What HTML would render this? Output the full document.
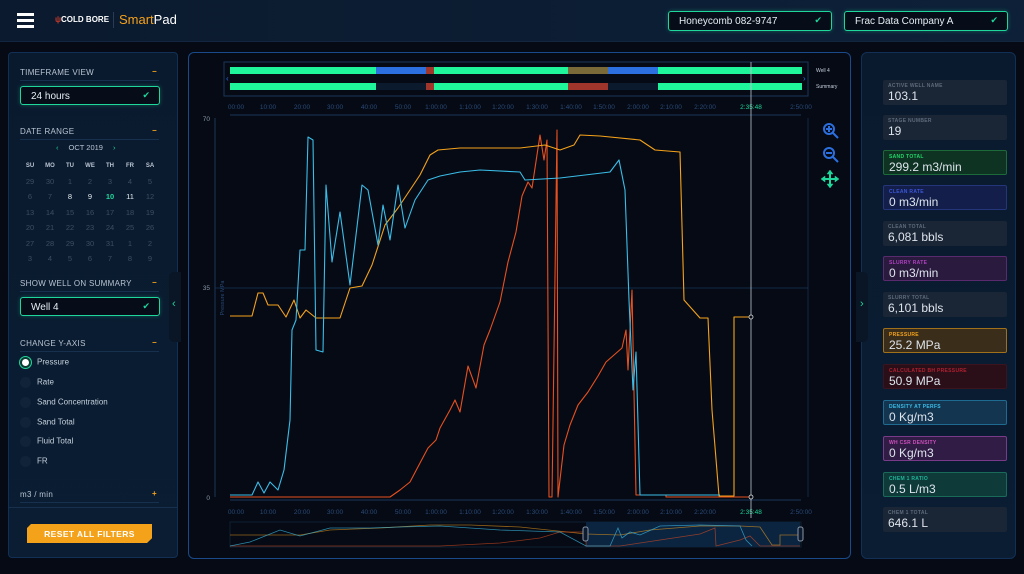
<!DOCTYPE html>
<html><head><meta charset="utf-8"><style>
*{box-sizing:border-box;margin:0;padding:0}
body{width:1024px;height:574px;background:#050a14;font-family:"Liberation Sans",sans-serif;color:#cfd8e3;overflow:hidden;position:relative}
.hdr{position:absolute;left:0;top:0;width:1024px;height:42px;background:linear-gradient(90deg,#0b1a2e,#0d2038);border-bottom:1px solid #12263f}
.dd{position:absolute;height:20px;border:1.5px solid #1fd79a;border-radius:3px;background:#060d18;font-size:10px;color:#e6edf3;padding:4px 0 0 10px;box-shadow:0 0 4px #1fd79a55}
.chev{position:absolute;right:9px;top:3px;color:#1fd79a;font-size:9px}
.lp{position:absolute;left:8px;top:52px;width:170px;height:506px;background:linear-gradient(180deg,#0a1a2e,#0a1d33);border:1px solid #123055;border-radius:4px}
.sec{position:absolute;left:12px;width:139px;font-size:8px;color:#b9c4d2;letter-spacing:.3px;border-bottom:1px solid #17304e;padding-bottom:3px}
.sec b{position:absolute;right:2px;top:-1px;color:#f5a21b;font-weight:bold}
.cal{position:absolute;left:12px;top:158px;width:140px;font-size:7.5px;color:#3c4d62}
.cal div{display:flex;justify-content:space-between;height:15.5px;align-items:center}
.cal span{width:20px;text-align:center}
.rad{position:absolute;left:13px;font-size:8px;color:#c6d0dc}
.rad i{display:inline-block;width:11px;height:11px;border-radius:50%;background:#102338;vertical-align:middle;margin-right:6px}
.cp{position:absolute;left:188px;top:52px;width:663px;height:507px;background:#050a14;border:1px solid #1a4a8a;border-radius:6px}
.rp{position:absolute;left:861px;top:52px;width:155px;height:507px;background:linear-gradient(180deg,#0a1a2e,#0a1d33);border:1px solid #123055;border-radius:6px}
.card{position:absolute;left:883px;width:124px;height:25px;background:#1a2535;border-radius:2px;padding:3px 5px}
.card s{display:block;text-decoration:none;font-size:5px;font-weight:bold;color:#5d6b7c;letter-spacing:.3px}
.card p{font-size:12px;color:#dde4ec;margin-top:0}
</style></head><body>
<div class="hdr">
 <div style="position:absolute;left:17px;top:13px;width:17px;height:3px;background:#fff;box-shadow:0 6px 0 #fff,0 12px 0 #fff"></div>
 <div style="position:absolute;left:55px;top:15px;font-size:8px;font-weight:bold;color:#fff"><span style="color:#c0392b">ψ</span>COLD BORE</div>
 <div style="position:absolute;left:113px;top:12px;width:1px;height:16px;background:#2a3c55"></div>
 <div style="position:absolute;left:119px;top:12px;font-size:13px;color:#fff"><span style="color:#f5a21b">Smart</span>Pad</div>
 <div class="dd" style="left:668px;top:11px;width:164px">Honeycomb 082-9747<span class="chev">✔</span></div>
 <div class="dd" style="left:844px;top:11px;width:164px">Frac Data Company A<span class="chev">✔</span></div>
</div>
<div class="lp"></div>
<div class="sec" style="left:20px;top:68px">TIMEFRAME VIEW<b>−</b></div>
<div class="dd" style="left:20px;top:86px;width:140px;height:19px;font-size:10px">24 hours<span class="chev">✔</span></div>
<div class="sec" style="left:20px;top:127px">DATE RANGE<b>−</b></div>
<div style="position:absolute;left:56px;top:143px;font-size:7.5px;color:#b9c4d2"><span style="color:#1fd79a;margin-right:10px">‹</span>OCT 2019<span style="color:#1fd79a;margin-left:10px">›</span></div>
<div class="cal" style="left:20px">
<div style="color:#b9c4d2;font-weight:bold;font-size:6px"><span>SU</span><span>MO</span><span>TU</span><span>WE</span><span>TH</span><span>FR</span><span>SA</span></div>
<div><span>29</span><span>30</span><span>1</span><span>2</span><span>3</span><span>4</span><span>5</span></div>
<div><span>6</span><span>7</span><span style="color:#e6edf3">8</span><span style="color:#e6edf3">9</span><span style="color:#1fd79a;font-weight:bold">10</span><span style="color:#e6edf3">11</span><span>12</span></div>
<div><span>13</span><span>14</span><span>15</span><span>16</span><span>17</span><span>18</span><span>19</span></div>
<div><span>20</span><span>21</span><span>22</span><span>23</span><span>24</span><span>25</span><span>26</span></div>
<div><span>27</span><span>28</span><span>29</span><span>30</span><span>31</span><span>1</span><span>2</span></div>
<div><span>3</span><span>4</span><span>5</span><span>6</span><span>7</span><span>8</span><span>9</span></div>
</div>
<div class="sec" style="left:20px;top:279px">SHOW WELL ON SUMMARY<b>−</b></div>
<div class="dd" style="left:20px;top:297px;width:140px;height:19px;font-size:10px">Well 4<span class="chev">✔</span></div>
<div class="sec" style="left:20px;top:339px">CHANGE Y-AXIS<b>−</b></div>
<div class="rad" style="left:20px;top:357px"><i style="background:#fff;border:2.5px solid #0f3a33;box-shadow:0 0 0 1px #1fd79a"></i>Pressure</div>
<div class="rad" style="left:20px;top:377px"><i></i>Rate</div>
<div class="rad" style="left:20px;top:397px"><i></i>Sand Concentration</div>
<div class="rad" style="left:20px;top:417px"><i></i>Sand Total</div>
<div class="rad" style="left:20px;top:436px"><i></i>Fluid Total</div>
<div class="rad" style="left:20px;top:456px"><i></i>FR</div>
<div class="sec" style="left:20px;top:490px;border-bottom:1px solid #17304e">m3 / min<b>+</b></div>
<div style="position:absolute;left:8px;top:507px;width:170px;height:1px;background:#17304e"></div>
<div style="position:absolute;left:27px;top:524px;width:125px;height:19px;background:#f5a21b;clip-path:polygon(4px 0,100% 0,100% 75%,calc(100% - 5px) 100%,0 100%,0 4px);color:#fff;font-size:8.5px;font-weight:bold;text-align:center;padding-top:5px;letter-spacing:.4px">RESET ALL FILTERS</div>
<div style="position:absolute;left:169px;top:272px;width:12px;height:70px;background:#0a1526;border-radius:5px 0 0 5px;color:#1fd79a;font-size:11px;padding:26px 0 0 3px">‹</div>
<div class="cp"></div>
<div class="rp"></div>
<div style="position:absolute;left:856px;top:272px;width:12px;height:70px;background:#0a1526;border-radius:0 5px 5px 0;color:#1fd79a;font-size:11px;padding:26px 0 0 4px">›</div>
<svg style="position:absolute;left:0;top:0" width="1024" height="574" font-family="Liberation Sans">
<rect x="224" y="62" width="584" height="34" fill="none" stroke="#1a3558"/>
<rect x="230" y="67" width="146" height="7" fill="#1ff59a"/><rect x="376" y="67" width="50" height="7" fill="#2b6fe0"/><rect x="426" y="67" width="8" height="7" fill="#a0352b"/><rect x="434" y="67" width="134" height="7" fill="#1ff59a"/><rect x="568" y="67" width="40" height="7" fill="#7a6a3a"/><rect x="608" y="67" width="50" height="7" fill="#2b6fe0"/><rect x="658" y="67" width="144" height="7" fill="#1ff59a"/>
<rect x="230" y="83" width="146" height="7" fill="#1ff59a"/><rect x="376" y="83" width="50" height="7" fill="#0c1a2e"/><rect x="426" y="83" width="8" height="7" fill="#a0352b"/><rect x="434" y="83" width="134" height="7" fill="#1ff59a"/><rect x="568" y="83" width="40" height="7" fill="#a0352b"/><rect x="608" y="83" width="50" height="7" fill="#0c1a2e"/><rect x="658" y="83" width="144" height="7" fill="#1ff59a"/>
<text x="226" y="81" fill="#2b6fe0" font-size="8">‹</text><text x="803" y="81" fill="#2b6fe0" font-size="8">›</text>
<text x="816" y="72" fill="#c6d0dc" font-size="5">Well 4</text><text x="816" y="88" fill="#c6d0dc" font-size="5">Summary</text>
<g fill="#2a4a78" font-size="6.5" text-anchor="middle">
<text x="236" y="109">00:00</text><text x="268" y="109">10:00</text><text x="302" y="109">20:00</text><text x="335" y="109">30:00</text><text x="369" y="109">40:00</text><text x="403" y="109">50:00</text><text x="436" y="109">1:00:00</text><text x="470" y="109">1:10:00</text><text x="503" y="109">1:20:00</text><text x="537" y="109">1:30:00</text><text x="571" y="109">1:40:00</text><text x="604" y="109">1:50:00</text><text x="638" y="109">2:00:00</text><text x="671" y="109">2:10:00</text><text x="705" y="109">2:20:00</text><text x="801" y="109">2:50:00</text>
<text x="236" y="514">00:00</text><text x="268" y="514">10:00</text><text x="302" y="514">20:00</text><text x="335" y="514">30:00</text><text x="369" y="514">40:00</text><text x="403" y="514">50:00</text><text x="436" y="514">1:00:00</text><text x="470" y="514">1:10:00</text><text x="503" y="514">1:20:00</text><text x="537" y="514">1:30:00</text><text x="571" y="514">1:40:00</text><text x="604" y="514">1:50:00</text><text x="638" y="514">2:00:00</text><text x="671" y="514">2:10:00</text><text x="705" y="514">2:20:00</text><text x="801" y="514">2:50:00</text>
</g>
<line x1="230" y1="115" x2="801" y2="115" stroke="#1a3558"/>
<line x1="230" y1="500" x2="801" y2="500" stroke="#1a3558"/>
<rect x="736" y="101" width="30" height="10" fill="#050a14"/><text x="751" y="109" fill="#1fd79a" font-size="6.5" text-anchor="middle">2:35:48</text>
<rect x="736" y="506" width="30" height="10" fill="#050a14"/><text x="751" y="514" fill="#1fd79a" font-size="6.5" text-anchor="middle">2:35:48</text>
<text x="210" y="121" fill="#8a96a6" font-size="6.5" text-anchor="end">70</text>
<text x="210" y="290" fill="#8a96a6" font-size="6.5" text-anchor="end">35</text>
<text x="210" y="500" fill="#8a96a6" font-size="6.5" text-anchor="end">0</text>
<text transform="translate(224,298) rotate(-90)" fill="#2a4a78" font-size="5.5" text-anchor="middle">Pressure MPa</text>
<line x1="215" y1="118" x2="215" y2="497" stroke="#1a3558"/>
<line x1="215" y1="288" x2="808" y2="288" stroke="#1a3558" stroke-width=".7"/>
<line x1="808" y1="118" x2="808" y2="497" stroke="#1a3558" stroke-width=".7"/>
<line x1="751" y1="62" x2="751" y2="518" stroke="#bfc7d1" stroke-width=".8"/>
<g fill="none" stroke-width="1.1" stroke-linejoin="round">
<polyline stroke="#e8501f" points="230,497 390,497 400,490 410,482 420,463 428,448 436,440 440,428 450,410 455,400 460,412 468,366 476,388 484,345 490,330 500,302 508,262 516,232 522,196 528,182 532,188 540,135 544,160 547,140 549,497 552,497 557,130 558,497 564,445 570,425 578,405 588,392 598,376 606,362 614,355 622,348 626,330 628,370 632,290 636,495 666,495 666,497 751,497"/>
<polyline stroke="#f5a21b" points="230,316 252,316 258,293 263,293 268,305 278,305 286,317 294,300 300,318 306,310 316,318 340,318 350,288 362,286 372,265 385,225 398,208 410,190 420,175 430,155 438,150 460,148 520,148 545,145 560,150 574,145 580,135 600,136 640,140 655,150 680,152 684,300 700,318 708,318 712,410 719,496 734,496 734,317 751,317"/>
<polyline stroke="#3bbde8" points="230,495 252,495 258,482 264,493 270,482 278,490 284,470 290,420 292,330 296,320 300,250 305,250 308,137 313,140 316,350 323,352 326,185 332,262 340,212 350,285 362,185 368,190 378,245 383,205 390,240 398,185 405,228 415,200 428,180 440,176 460,172 480,170 520,172 525,180 560,178 610,172 619,160 625,190 629,300 633,390 636,352 640,495 720,495"/>
</g>
<circle cx="751" cy="317" r="2" fill="#050a14" stroke="#ddd" stroke-width=".8"/><circle cx="751" cy="497" r="2" fill="#050a14" stroke="#ddd" stroke-width=".8"/>
<g stroke="#2b6fe0" stroke-width="2" fill="none"><circle cx="829" cy="129" r="5"/><line x1="833" y1="133" x2="838" y2="138"/><line x1="826" y1="129" x2="832" y2="129"/><line x1="829" y1="126" x2="829" y2="132"/>
<circle cx="829" cy="153" r="5"/><line x1="833" y1="157" x2="838" y2="162"/><line x1="826" y1="153" x2="832" y2="153"/></g>
<g stroke="#1fd79a" stroke-width="2" fill="#1fd79a"><line x1="830" y1="172" x2="830" y2="186"/><line x1="823" y1="179" x2="837" y2="179"/><path d="M827 174 830 170 833 174Z M827 184 830 188 833 184Z M825 176 821 179 825 182Z M835 176 839 179 835 182Z" stroke-width=".5"/></g>
<rect x="230" y="522" width="571" height="25" fill="#050a14" stroke="#0f2035"/>
<rect x="586" y="522" width="214" height="25" fill="#0b2440"/>
<g fill="none" stroke-width=".8">
<polyline stroke="#f5a21b" opacity=".6" points="230,535 300,535 330,530 380,528 430,525 470,525 520,527 586,534 620,535 650,530 700,526 740,526 760,527 772,545 780,545 780,535 800,535"/>
<polyline stroke="#e8501f" opacity=".6" points="230,546 440,546 500,543 540,538 560,532 586,532 586,546 620,546 660,540 700,534 715,528 716,546 740,540 750,536 760,546 800,546"/>
<polyline stroke="#3bbde8" opacity=".7" points="230,546 250,542 280,530 300,536 330,528 370,528 400,527 440,526 500,530 560,532 586,546 610,546 618,528 622,538 630,532 640,535 660,526 700,525 740,526 746,540 752,546"/>
</g>
<rect x="583" y="527" width="5" height="14" rx="2" fill="#0b1a2e" stroke="#8a96a6"/><rect x="798" y="527" width="5" height="14" rx="2" fill="#0b1a2e" stroke="#8a96a6"/>
</svg>
<div class="card" style="top:80px"><s>ACTIVE WELL NAME</s><p>103.1</p></div>
<div class="card" style="top:115px"><s>STAGE NUMBER</s><p>19</p></div>
<div class="card" style="top:150px;background:#0f3322;border:1px solid #1c6a3a"><s style="color:#1fd76a">SAND TOTAL</s><p>299.2 m3/min</p></div>
<div class="card" style="top:185px;background:#131f4a;border:1px solid #25357a"><s style="color:#3a55d8">CLEAN RATE</s><p>0 m3/min</p></div>
<div class="card" style="top:221px"><s>CLEAN TOTAL</s><p>6,081 bbls</p></div>
<div class="card" style="top:256px;background:#2a1a3e;border:1px solid #5a2a6e"><s style="color:#b040c0">SLURRY RATE</s><p>0 m3/min</p></div>
<div class="card" style="top:292px"><s>SLURRY TOTAL</s><p>6,101 bbls</p></div>
<div class="card" style="top:328px;background:#3a2e1a;border:1px solid #a0701a"><s style="color:#f5a21b">PRESSURE</s><p>25.2 MPa</p></div>
<div class="card" style="top:364px;background:#2a0f18;border:1px solid #3a1520"><s style="color:#b02030">CALCULATED BH PRESSURE</s><p>50.9 MPa</p></div>
<div class="card" style="top:400px;background:#143550;border:1px solid #1e6a90"><s style="color:#3bbde8">DENSITY AT PERFS</s><p>0 Kg/m3</p></div>
<div class="card" style="top:436px;background:#301c44;border:1px solid #7a3a8a"><s style="color:#d050c0">WH CSR DENSITY</s><p>0 Kg/m3</p></div>
<div class="card" style="top:472px;background:#0f3a3a;border:1px solid #1a6a5a"><s style="color:#1fb59a">CHEM 1 RATIO</s><p>0.5 L/m3</p></div>
<div class="card" style="top:507px"><s>CHEM 1 TOTAL</s><p>646.1 L</p></div>
</body></html>
